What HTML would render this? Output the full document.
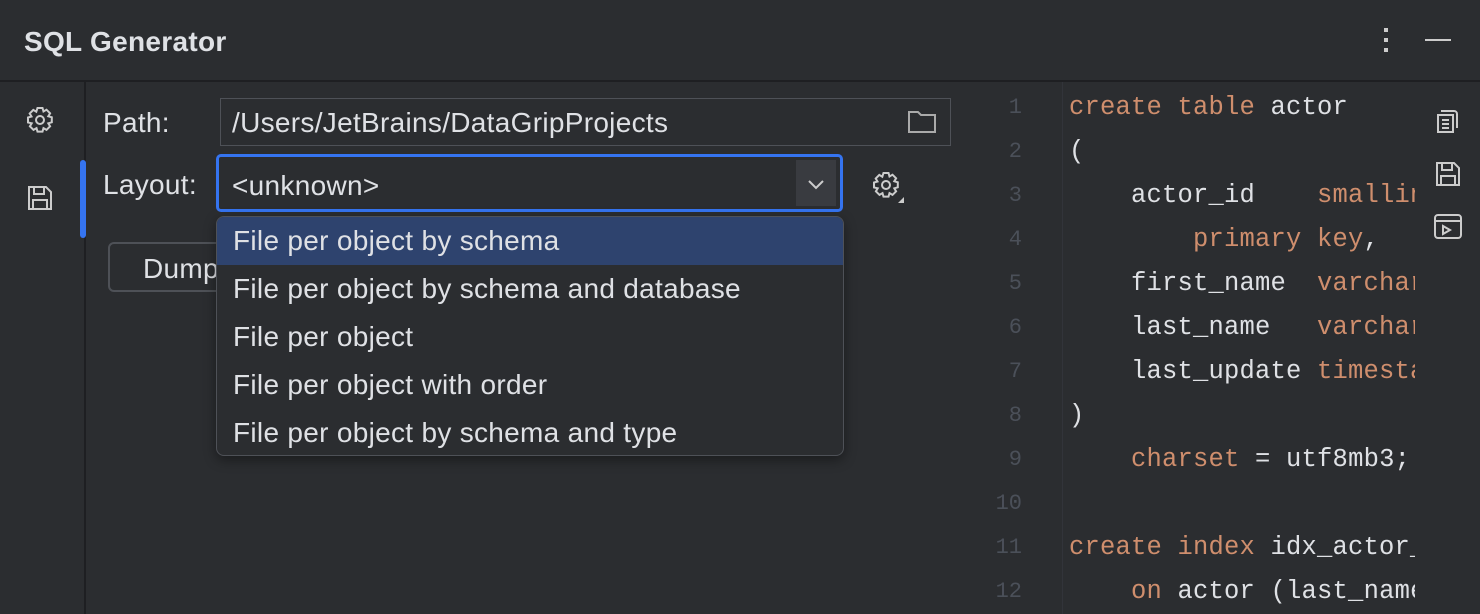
<!DOCTYPE html>
<html><head><style>
html,body{margin:0;width:1480px;height:614px;overflow:hidden}
body{background:#2b2d30;position:relative;font-family:"Liberation Sans",sans-serif;color:#dfe1e5}
.a{position:absolute}
.code{font-family:"Liberation Mono",monospace;font-size:25.5px;white-space:pre;letter-spacing:0.2px}
.k{color:#cf8e6d}
.ln{font-family:"Liberation Mono",monospace;font-size:22px;color:#4b5059;width:60px;text-align:right;left:962px}
.t{font-size:28px;letter-spacing:0.3px}
.it{height:48px;line-height:48px;padding-left:16px;font-size:28px;letter-spacing:0.3px;white-space:nowrap}
</style></head><body>
<div class="a" style="left:24px;top:26px;font-size:28px;font-weight:bold;color:#dfe1e5;letter-spacing:0.3px">SQL Generator</div>
<div class="a" style="left:1384px;top:28px;width:4px;height:4px;background:#ccc;box-shadow:0 10px #ccc,0 20px #ccc"></div>
<div class="a" style="left:1425px;top:39px;width:26px;height:2px;background:#ccc"></div>
<div class="a" style="left:0;top:80px;width:1480px;height:2px;background:#1e1f22"></div>
<div class="a" style="left:84px;top:82px;width:2px;height:532px;background:#1e1f22"></div>
<div class="a" style="left:80px;top:160px;width:6px;height:78px;background:#3574f0;border-radius:3px"></div>
<svg class="a" style="left:25px;top:105px" width="30" height="30" viewBox="0 0 30 30" fill="none" stroke="#ccc" stroke-width="2"><path d="M12.5 3h5l1 3.5 3-1.8 3.6 3.6-1.8 3 3.5 1v5l-3.5 1 1.8 3-3.6 3.6-3-1.8-1 3.5h-5l-1-3.5-3 1.8-3.6-3.6 1.8-3L3 17.5v-5l3.5-1-1.8-3 3.6-3.6 3 1.8z"/><circle cx="15" cy="15" r="4"/></svg>
<svg class="a" style="left:27px;top:185px" width="26" height="26" viewBox="0 0 26 26" fill="none" stroke="#ccc" stroke-width="2"><path d="M2 2h17l5 5v17H2z M7 2v7h10V2 M6 24v-9h14v9"/></svg>
<div class="a t" style="left:103px;top:107px">Path:</div>
<div class="a" style="left:220px;top:98px;width:729px;height:46px;border:1px solid #4e5157"></div>
<div class="a t" style="left:232px;top:107px">/Users/JetBrains/DataGripProjects</div>
<svg class="a" style="left:907px;top:109px" width="30" height="26" viewBox="0 0 30 26" fill="none" stroke="#aaa" stroke-width="2"><path d="M2 3h9l3 3h14v17H2z"/></svg>
<div class="a t" style="left:103px;top:169px">Layout:</div>
<div class="a" style="left:216px;top:154px;width:621px;height:52px;border:3px solid #3574f0;border-radius:5px"></div>
<div class="a t" style="left:232px;top:170px">&lt;unknown&gt;</div>
<div class="a" style="left:796px;top:160px;width:40px;height:46px;background:#393b40"></div>
<svg class="a" style="left:806px;top:177px" width="20" height="14" viewBox="0 0 20 14" fill="none" stroke="#ccc" stroke-width="2"><path d="M3 4l7 7 7-7"/></svg>
<svg class="a" style="left:870px;top:170px" width="36" height="34" viewBox="0 0 36 34" fill="none" stroke="#ccc" stroke-width="2"><path d="M13.5 3h5l1 3.5 3-1.8 3.6 3.6-1.8 3 3.5 1v5l-3.5 1 1.8 3-3.6 3.6-3-1.8-1 3.5h-5l-1-3.5-3 1.8-3.6-3.6 1.8-3L4 17.5v-5l3.5-1-1.8-3 3.6-3.6 3 1.8z"/><circle cx="16" cy="15" r="4"/><path d="M34 27v6h-6z" fill="#ccc" stroke="none"/></svg>
<div class="a" style="left:108px;top:242px;width:200px;height:46px;border:2px solid #4e5157;border-radius:6px"></div>
<div class="a t" style="left:143px;top:253px">Dump</div>
<div class="a" style="left:216px;top:216px;width:626px;height:238px;background:#2b2d30;border:1px solid #4e5157;border-radius:8px;overflow:hidden;box-shadow:0 4px 12px rgba(0,0,0,.4)">
<div class="it" style="background:#2e436e">File per object by schema</div>
<div class="it">File per object by schema and database</div>
<div class="it">File per object</div>
<div class="it">File per object with order</div>
<div class="it">File per object by schema and type</div>
</div>
<div class="a" style="left:1062px;top:82px;width:1px;height:532px;background:#32343a"></div>
<div class="a ln" style="top:86px;line-height:44px">1<br>2<br>3<br>4<br>5<br>6<br>7<br>8<br>9<br>10<br>11<br>12</div>
<div class="a code" style="left:1069px;top:86px;line-height:44px;width:346px;overflow:hidden"><span class="k">create table</span> actor
(
    actor_id    <span class="k">smallint</span>
        <span class="k">primary key</span>,
    first_name  <span class="k">varchar</span>
    last_name   <span class="k">varchar</span>
    last_update <span class="k">timestamp</span>
)
    <span class="k">charset</span> = utf8mb3;

<span class="k">create index</span> idx_actor_
    <span class="k">on</span> actor (last_name</div>
<svg class="a" style="left:1434px;top:107px" width="28" height="28" viewBox="0 0 28 28" fill="none" stroke="#ccc" stroke-width="2"><path d="M7 4h13a3 3 0 0 1 3 3v14 M4 8h15v17H4z M8 13h7 M8 17h7 M8 21h7"/></svg>
<svg class="a" style="left:1435px;top:161px" width="26" height="26" viewBox="0 0 26 26" fill="none" stroke="#ccc" stroke-width="2"><path d="M2 2h17l5 5v17H2z M7 2v7h10V2 M6 24v-9h14v9"/></svg>
<svg class="a" style="left:1433px;top:213px" width="30" height="28" viewBox="0 0 30 28" fill="none" stroke="#ccc" stroke-width="2"><rect x="2" y="2" width="26" height="23" rx="3"/><path d="M2 8h26 M10 13v8l7-4z"/></svg>
</body></html>
